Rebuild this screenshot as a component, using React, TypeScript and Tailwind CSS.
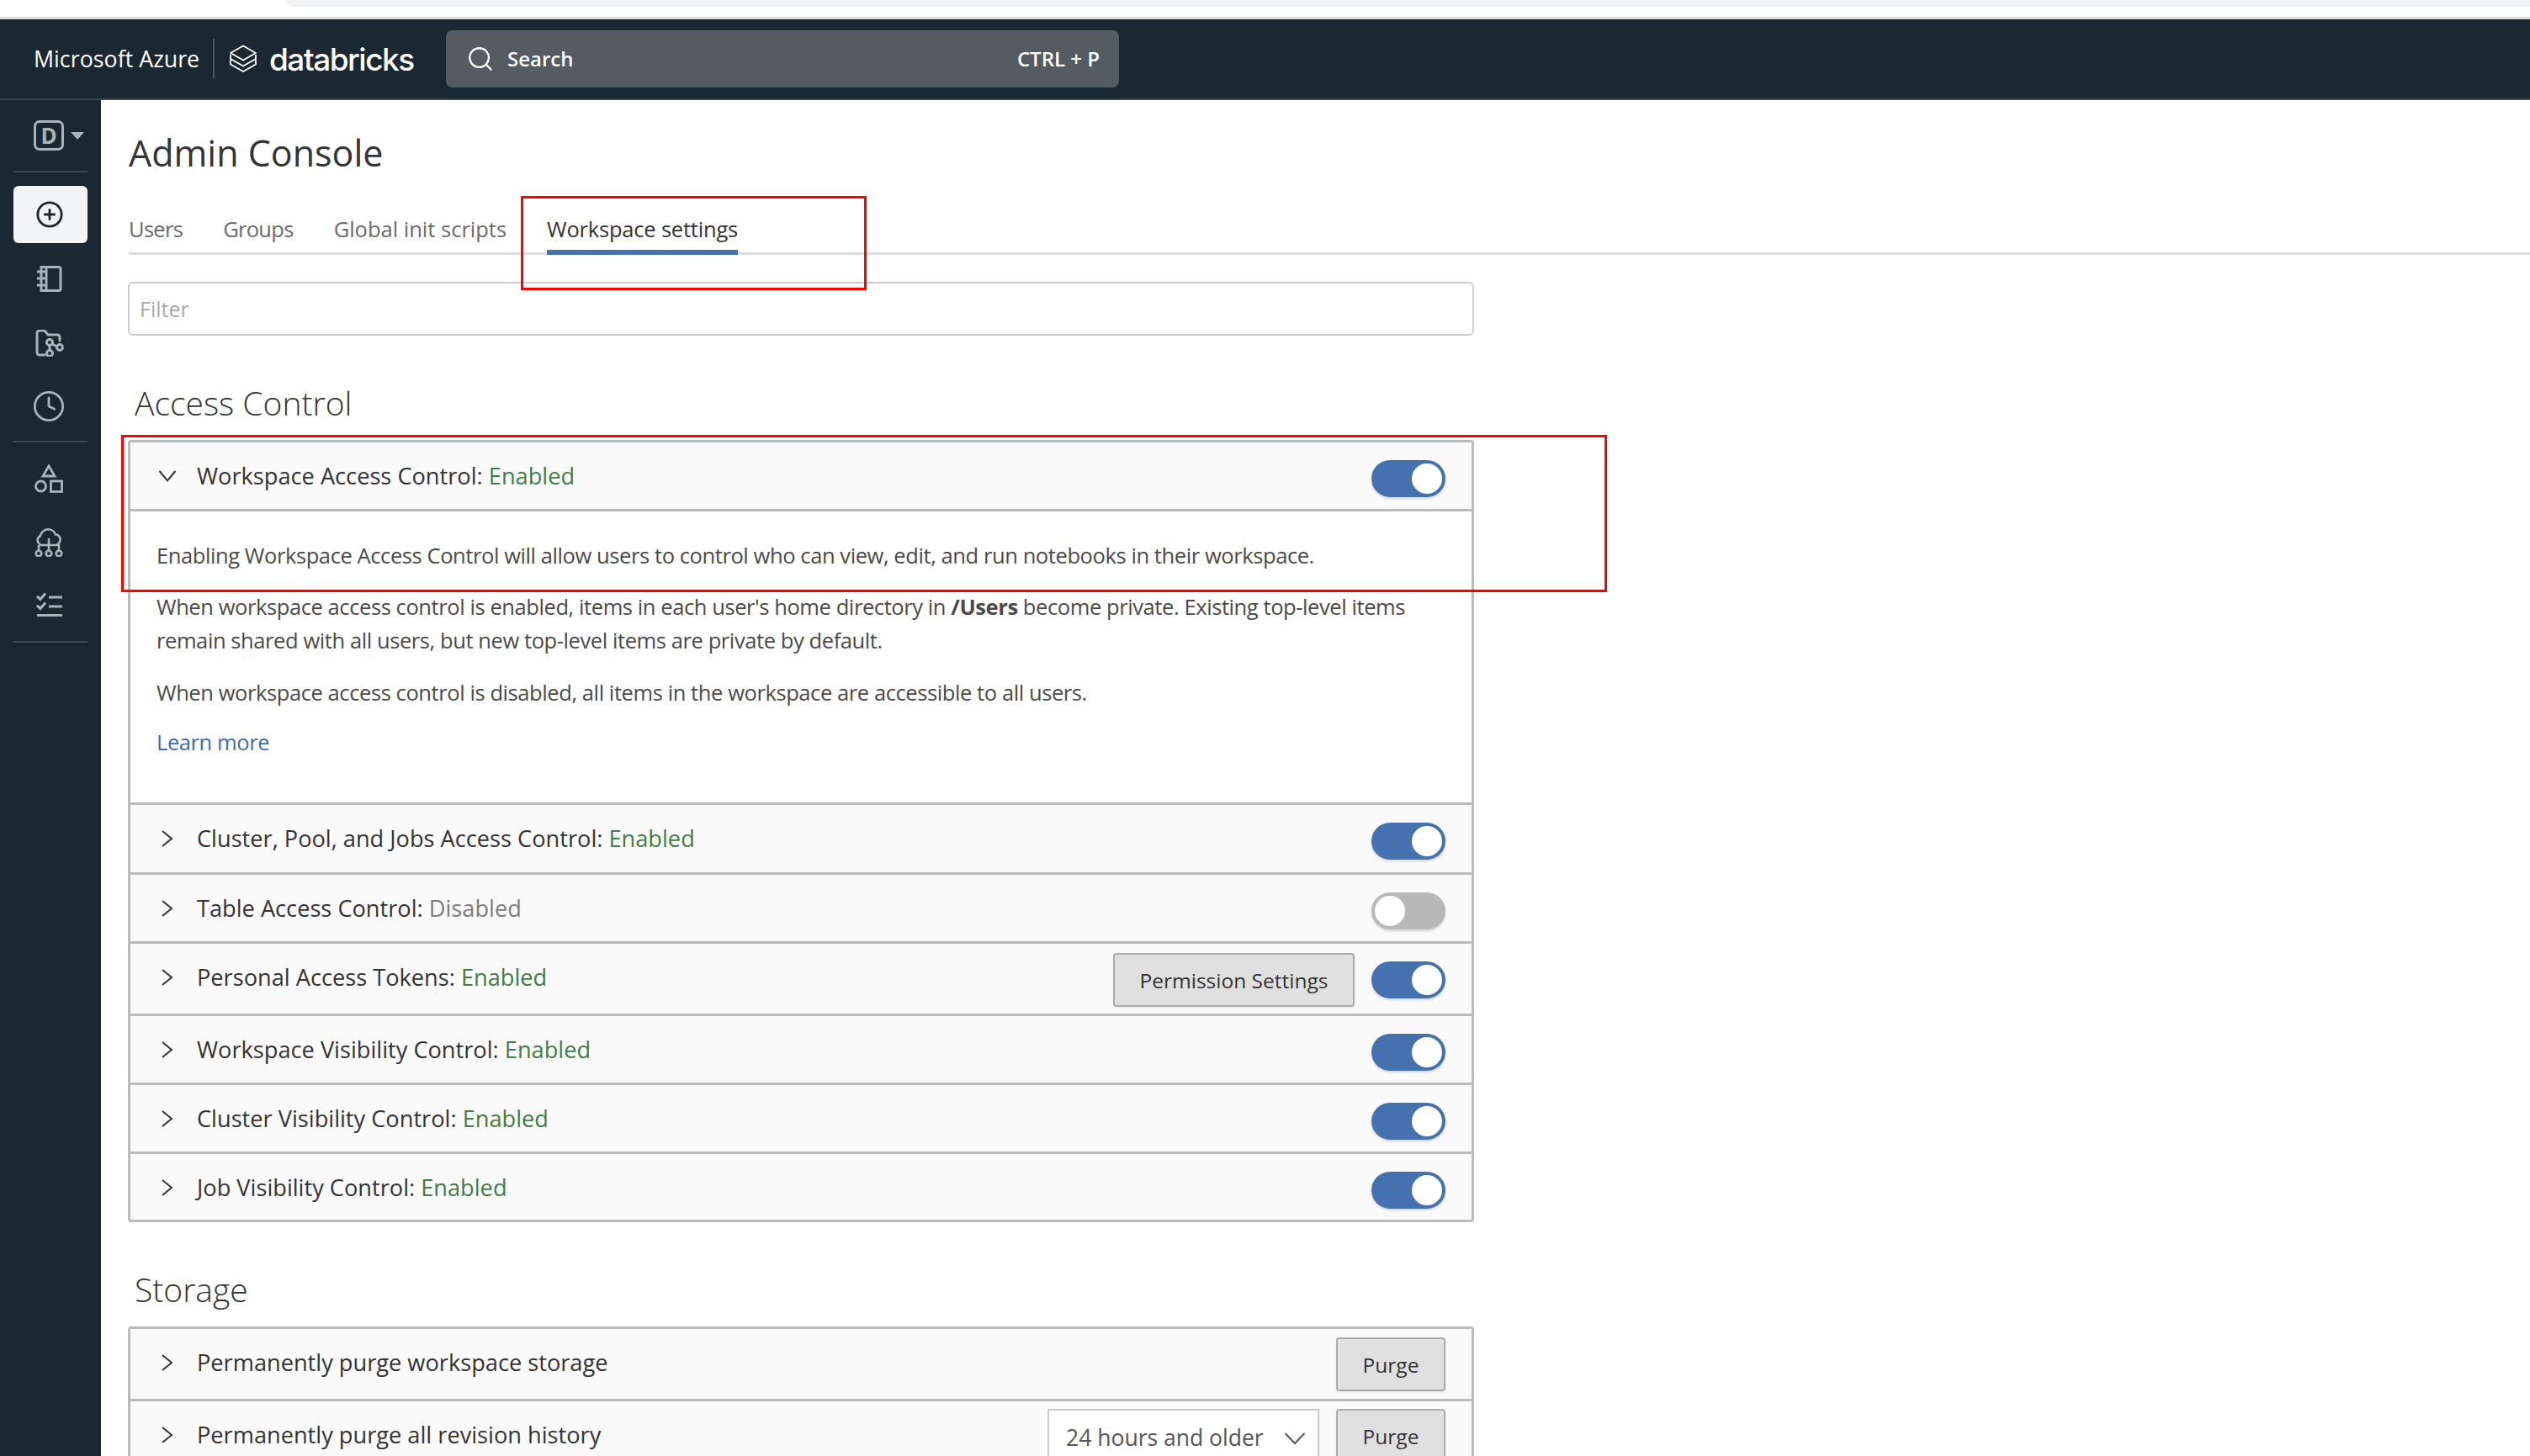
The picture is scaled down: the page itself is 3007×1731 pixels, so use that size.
import { CirclePlus, Clock, Search } from "lucide-react"

interface RowProps {
  label: string
  status?: "Enabled" | "Disabled"
  open?: boolean
  toggle?: boolean
  actions?: React.ReactNode
  last?: boolean
  height: string
}

function LogoStack() {
  return (
    <svg width="34" height="34" viewBox="0 0 34 34" fill="none" stroke="white" strokeWidth="1.8" strokeLinejoin="round">
      <path d="M17 1.5 32 10 17 18.5 2 10Z" />
      <path d="M2 12v5l15 8.5 15-8.5v-5" />
      <path d="M2 18v5.5L17 32l15-8.5V18" />
    </svg>
  )
}

function NotebookIcon() {
  return (
    <svg width="32" height="32" viewBox="0 0 32 32" fill="none" stroke="#a9b4ba" strokeWidth="3">
      <path d="M6 2.5h21a2 2 0 0 1 2 2v24a2 2 0 0 1-2 2H6ZM12 2.5v28M1 8h10M1 16h10M1 24h10" />
    </svg>
  )
}

function FolderGitIcon() {
  return (
    <svg width="34" height="32" viewBox="0 0 34 32" fill="none" stroke="#a9b4ba" strokeWidth="3">
      <path d="M11 30H5a3 3 0 0 1-3-3V4a3 3 0 0 1 3-3h6l4 5h11a3 3 0 0 1 3 3v4" strokeLinecap="round" />
      <circle cx="17" cy="15" r="3.6" />
      <circle cx="29" cy="21" r="3.4" />
      <circle cx="17" cy="28" r="3.6" />
      <path d="M20 17l6 3M17 19v5" />
    </svg>
  )
}

function ShapesIcon() {
  return (
    <svg width="36" height="36" viewBox="0 0 36 36" fill="none" stroke="#a9b4ba" strokeWidth="2.800">
      <path d="M18 3l7 12H11Z" />
      <circle cx="8.500" cy="27" r="6" />
      <rect x="20.500" y="21" width="13" height="12.500" />
    </svg>
  )
}

function CloudNetIcon() {
  return (
    <svg width="34" height="34" viewBox="0 0 34 34" fill="none" stroke="#a9b4ba" strokeWidth="2.6">
      <path d="M6 18.5c-3-2-3.500-7 .5-9C8 4 13 .5 17.500 1.500c4 .5 6.500 3 7.500 6 5 0 8 7 3 11" strokeLinecap="round" />
      <path d="M17 12v15M5 20h24v7M5 20v7" />
      <circle cx="5" cy="30" r="3.300" />
      <circle cx="17" cy="30" r="3.300" />
      <circle cx="29" cy="30" r="3.300" />
    </svg>
  )
}

function ChecklistIcon() {
  return (
    <svg width="32" height="30" viewBox="0 0 32 30" fill="none" stroke="#a9b4ba" strokeWidth="3">
      <path d="M1 5l4 3.500 6-7M1 16l4 3.500 6-7" />
      <path d="M15 6h16M15 17h16M1 27.500h30" />
    </svg>
  )
}

function NavDivider() {
  return <div className="mx-4 h-[2px] bg-[#3c4a52]" />
}

function Chevron({ open }: { open?: boolean }) {
  if (open) {
    return (
      <svg width="22" height="16" viewBox="0 0 22 16" fill="none" stroke="#333" strokeWidth="2">
        <path d="M1.500 2 11 13.500 20.500 2" />
      </svg>
    )
  }
  return (
    <svg width="22" height="20" viewBox="0 0 22 20" fill="none" stroke="#333" strokeWidth="2">
      <path d="M5 1l11 9-11 9" />
    </svg>
  )
}

function Toggle({ on }: { on: boolean }) {
  return (
    <span
      className={`flex h-[44px] w-[88px] shrink-0 rounded-full p-[4px] shadow-[0_2px_3px_rgba(0,0,0,0.15)] ${
        on ? "justify-end bg-[#4571ae]" : "justify-start bg-[#b8b8b8]"
      }`}
    >
      <span className="h-[36px] w-[36px] rounded-full bg-white" />
    </span>
  )
}

function GrayButton({ children, width }: { children: React.ReactNode; width: string }) {
  return (
    <button className={`h-[64px] shrink-0 rounded-[4px] border-[2px] border-[#ababab] bg-[#e0e0e0] pt-[3px] text-[24.5px] text-[#333] shadow-[0_2px_3px_rgba(0,0,0,0.05)] ${width}`}>
      {children}
    </button>
  )
}

function Row({ label, status, open, toggle, actions, last, height }: RowProps) {
  return (
    <div className={`flex items-start bg-[#fafafa] pr-[31px] ${height} ${last ? "" : "border-b-[3px] border-[#bbbbbb]"}`}>
      <div className="flex h-[80px] flex-1 items-center">
        <span className="ml-[33px] flex w-[46px] shrink-0 items-center">
          <Chevron open={open} />
        </span>
        <span className="text-[27.2px] font-medium text-[#333]">
          {label}
          {status && ": "}
          {status && (
            <span className={status === "Enabled" ? "text-[#3f7d46]" : "text-[#7c7c7c]"}>{status}</span>
          )}
        </span>
      </div>
      {actions}
      {toggle !== undefined && (
        <div className="pt-[21px]">
          <Toggle on={toggle} />
        </div>
      )}
    </div>
  )
}

export default function App() {
  return (
    <div className="relative flex h-[1731px] w-[3007px] flex-col overflow-hidden bg-white font-['Open_Sans',sans-serif] text-[#333]">
      {/* browser chrome leftover at the top */}
      <div className="h-[20px] shrink-0 bg-white">
        <div className="ml-[340px] h-[8px] rounded-bl-[14px] bg-[#f1f3f4]" />
      </div>
      <header className="flex h-[99px] shrink-0 items-center border-t-[3px] border-b-[2px] border-t-[#dddddd] border-b-[#3a4852] bg-[#1b2831] pl-[40px] text-white">
        <span className="w-[213px] text-[26.8px] leading-none">Microsoft Azure</span>
        <span className="h-[48px] w-[2px] bg-[#4a565e]" />
        <span className="ml-[17px] flex items-center">
          <LogoStack />
        </span>
        <span className="ml-[14px] w-[210px] font-['Inter',sans-serif] text-[37px] font-medium leading-none tracking-[-1.5px]">databricks</span>
        <div className="flex h-[68px] w-[800px] items-center rounded-[8px] bg-[#545b62] pl-[24px] pr-[23px]">
          <Search size={34} strokeWidth={1.6} className="shrink-0 text-white" />
          <span className="ml-[15px] flex-1 text-[24px] font-semibold">Search</span>
          <span className="text-[24px] font-semibold">CTRL + P</span>
        </div>
      </header>
      <div className="flex min-h-0 flex-1">
        <nav className="flex w-[120px] shrink-0 flex-col bg-[#1b2831] text-[#a9b4ba]">
          <div className="flex h-[84px] items-center pl-[40px]">
            <span className="flex h-[36px] w-[36px] items-center justify-center rounded-[7px] border-[3px] border-[#a9b4ba] text-[26px] font-bold leading-none">D</span>
            <span className="ml-[8px] h-0 w-0 border-x-[8px] border-t-[9px] border-x-transparent border-t-[#a9b4ba]" />
          </div>
          <NavDivider />
          <div className="mx-4 mt-[16px] flex h-[68px] items-center justify-center rounded-[6px] bg-[#f3f4f6] pr-[2px] text-[#1b2831]">
            <CirclePlus size={34} strokeWidth={2} />
          </div>
          <div className="mt-[25px] flex h-[34px] items-center justify-center pr-[2px]">
            <NotebookIcon />
          </div>
          <div className="mt-[43px] flex h-[34px] items-center justify-center pr-[2px]">
            <FolderGitIcon />
          </div>
          <div className="mt-[41px] flex h-[34px] items-center justify-center pr-[4px]">
            <Clock size={40} strokeWidth={1.7} />
          </div>
          <div className="mt-[24px]">
            <NavDivider />
          </div>
          <div className="mt-[25px] flex h-[36px] items-center justify-center pr-[4px]">
            <ShapesIcon />
          </div>
          <div className="mt-[40px] flex h-[36px] items-center justify-center pr-[4px]">
            <CloudNetIcon />
          </div>
          <div className="mt-[40px] flex h-[32px] items-center justify-center pr-[2px]">
            <ChecklistIcon />
          </div>
          <div className="mt-[27px]">
            <NavDivider />
          </div>
        </nav>

        <main className="min-w-0 flex-1">
          <h1 className="ml-[33px] pt-[37px] text-[43px] font-medium leading-[52px] text-[#333]">Admin Console</h1>
          <div className="ml-[33px] flex h-[95px] items-end gap-[48px] border-b-[3px] border-[#dddddd] text-[25.5px]">
            <span className="pb-[9px] tracking-[-0.7px] text-[#6b6b6b]">Users</span>
            <span className="pb-[9px] tracking-[-0.7px] text-[#6b6b6b]">Groups</span>
            <span className="pb-[9px] text-[#6b6b6b]">Global init scripts</span>
            <span className="-mb-[3px] border-b-[6px] border-[#4571ae] pb-[6px] tracking-[-0.2px] text-[#333]">Workspace settings</span>
          </div>
          <div className="ml-[32px] mt-[32px] flex h-[64px] w-[1600px] items-center rounded-[6px] border-[2.5px] border-[#cccccc] pl-[12px] pt-[2px] text-[25px] text-[#aaaaaa]">
            Filter
          </div>

          <h2 className="ml-[40px] mt-[50px] text-[39px] font-light leading-[60px] text-[#333]">Access Control</h2>
          <section className="ml-[32px] mt-[14px] w-[1600px] overflow-hidden rounded-[4px] border-[3px] border-[#bbbbbb]">
            <Row label="Workspace Access Control" status="Enabled" open toggle={true} height="h-[82px]" />
            <div className="h-[349px] border-b-[3px] border-[#bbbbbb] bg-white pl-[31px] pt-[32px] text-[25.500px] leading-[40px] tracking-[-0.41px] text-[#4a4a4a]">
              <p>Enabling Workspace Access Control will allow users to control who can view, edit, and run notebooks in their workspace.</p>
              <p className="mt-[21px]">
                When workspace access control is enabled, items in each user's home directory in <b>/Users</b> become private. Existing top-level items
                <br />
                remain shared with all users, but new top-level items are private by default.
              </p>
              <p className="mt-[22px]">When workspace access control is disabled, all items in the workspace are accessible to all users.</p>
              <p className="mt-[19px] text-[#3d6cb3]">Learn more</p>
            </div>
            <Row label="Cluster, Pool, and Jobs Access Control" status="Enabled" toggle={true} height="h-[83px]" />
            <Row label="Table Access Control" status="Disabled" toggle={false} height="h-[82px]" />
            <Row
              label="Personal Access Tokens"
              status="Enabled"
              toggle={true}
              height="h-[86px]"
              actions={
                <div className="mr-[20px] pt-[11px]">
                  <GrayButton width="w-[287px]">Permission Settings</GrayButton>
                </div>
              }
            />
            <Row label="Workspace Visibility Control" status="Enabled" toggle={true} height="h-[82px]" />
            <Row label="Cluster Visibility Control" status="Enabled" toggle={true} height="h-[82px]" />
            <Row label="Job Visibility Control" status="Enabled" toggle={true} last height="h-[78px]" />
          </section>

          <h2 className="ml-[40px] mt-[50px] text-[39px] font-light leading-[60px] text-[#333]">Storage</h2>
          <section className="ml-[32px] mt-[14px] w-[1600px] rounded-[4px] border-[3px] border-[#bbbbbb]">
            <Row
              label="Permanently purge workspace storage"
              height="h-[86px]"
              actions={
                <div className="pt-[10px]">
                  <GrayButton width="w-[130px]">Purge</GrayButton>
                </div>
              }
            />
            <Row
              label="Permanently purge all revision history"
              last
              height="h-[86px]"
              actions={
                <div className="flex gap-[20px] pt-[9px]">
                  <div className="flex h-[64px] w-[323px] items-center justify-between border-[2px] border-[#cccccc] bg-white pl-[20px] pr-[14px] pt-[6px] text-[26.5px] text-[#555]">
                    24 hours and older
                    <svg width="26" height="16" viewBox="0 0 26 16" fill="none" stroke="#555" strokeWidth="2">
                      <path d="M1.500 2 13 14 24.500 2" />
                    </svg>
                  </div>
                  <GrayButton width="w-[130px]">Purge</GrayButton>
                </div>
              }
            />
          </section>
        </main>
      </div>

      {/* red annotation boxes */}
      <div className="absolute left-[619px] top-[233px] h-[112px] w-[411px] border-[3.500px] border-[#ff0000]" />
      <div className="absolute left-[144px] top-[517px] h-[187px] w-[1766px] border-[3.500px] border-[#ff0000]" />
    </div>
  )
}
